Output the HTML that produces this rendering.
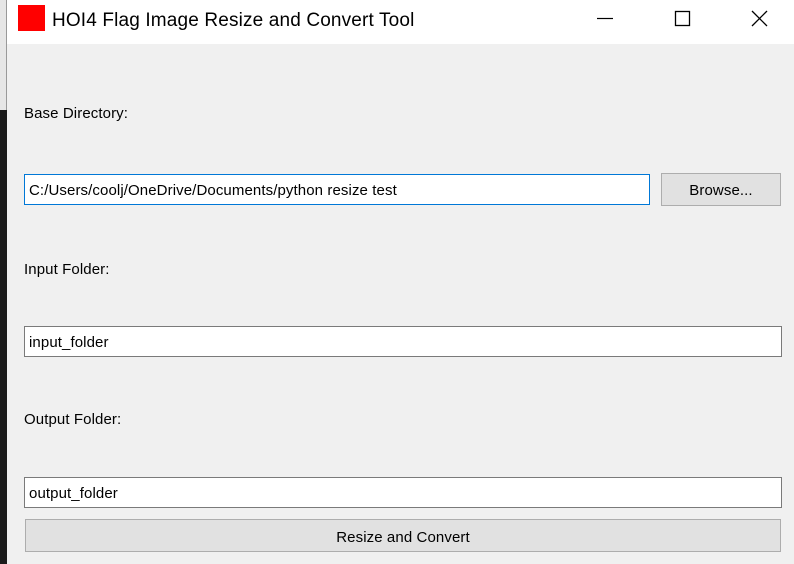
<!DOCTYPE html>
<html><head><style>
*{margin:0;padding:0;box-sizing:border-box}
body{width:794px;height:564px;overflow:hidden;background:#f0f0f0;position:relative;font-family:"Liberation Sans",sans-serif;color:#000}
.strip{position:absolute;left:0;top:0;width:7px;height:564px;background:#1b1b1b}
.strip2{position:absolute;left:0;top:0;width:7px;height:110px;background:#e6e6e6;border-right:1px solid #999}
.title{position:absolute;left:7px;top:0;width:787px;height:44px;background:#fff}
.ico{position:absolute;left:18px;top:5px;width:27px;height:26px;background:#ff0000}
.tt{position:absolute;left:52px;top:10px;font-size:19px;letter-spacing:0.15px;color:#000;white-space:nowrap}
.lbl{position:absolute;left:24px;font-size:15px;letter-spacing:0.1px;white-space:nowrap}
.ent{position:absolute;background:#fff;border:1px solid #7a7a7a;font-size:15px;letter-spacing:0.1px;padding-left:4px;padding-top:2px;line-height:27px;white-space:nowrap}
.btn{position:absolute;background:#e1e1e1;border:1px solid #adadad;font-size:15px;letter-spacing:0.1px;text-align:center}
</style></head><body>
<div class="strip"></div><div class="strip2"></div>
<div class="title"></div>
<div class="ico"></div>
<div class="tt">HOI4 Flag Image Resize and Convert Tool</div>
<svg style="position:absolute;left:580px;top:0" width="214" height="40">
<line x1="17" y1="18.5" x2="33" y2="18.5" stroke="#000" stroke-width="1.2"/>
<rect x="95.5" y="11.5" width="14" height="14" fill="none" stroke="#000" stroke-width="1.3"/>
<line x1="172" y1="11" x2="187" y2="26" stroke="#000" stroke-width="1.3"/>
<line x1="187" y1="11" x2="172" y2="26" stroke="#000" stroke-width="1.3"/>
</svg>
<div class="lbl" style="top:105px">Base Directory:</div>
<div class="ent" style="left:24px;top:174px;width:626px;height:31px;border-color:#0078d7">C:/Users/coolj/OneDrive/Documents/python resize test</div>
<div class="btn" style="left:661px;top:173px;width:120px;height:33px;line-height:33px">Browse...</div>
<div class="lbl" style="top:261px">Input Folder:</div>
<div class="ent" style="left:24px;top:326px;width:758px;height:31px">input_folder</div>
<div class="lbl" style="top:411px">Output Folder:</div>
<div class="ent" style="left:24px;top:477px;width:758px;height:31px">output_folder</div>
<div class="btn" style="left:25px;top:519px;width:756px;height:33px;line-height:35px">Resize and Convert</div>
</body></html>
